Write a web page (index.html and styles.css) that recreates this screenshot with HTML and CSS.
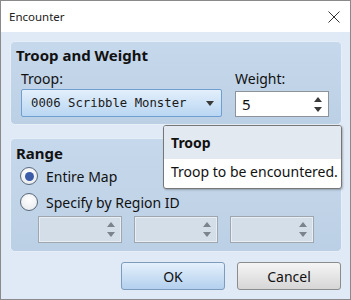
FILE: index.html
```html
<!DOCTYPE html>
<html lang="en">
<head>
  <meta charset="UTF-8" />
  <title>Encounter</title>
  <link rel="stylesheet" href="styles.css">
</head>
<body>
  <div class="dialog">
    <div class="titlebar">
      <span class="title">Encounter</span>
      <svg class="close" width="12" height="12" viewBox="0 0 12 12">
        <path d="M0.5 0.5 L11.5 11.5 M11.5 0.5 L0.5 11.5" stroke="#333" stroke-width="1" fill="none"/>
      </svg>
    </div>

    <div class="content">
      <div class="group troop-group">
        <div class="group-title">Troop and Weight</div>
        <div class="fields">
          <div class="field">
            <label class="field-label">Troop:</label>
            <div class="combo">
              <span class="combo-text">0006 Scribble Monster</span>
              <span class="arrow-down dark"></span>
            </div>
          </div>
          <div class="field">
            <label class="field-label">Weight:</label>
            <div class="spin weight-spin">
              <span class="spin-value">5</span>
              <span class="spin-arrows">
                <span class="arrow-up dark"></span>
                <span class="arrow-down dark"></span>
              </span>
            </div>
          </div>
        </div>
      </div>

      <div class="group range-group">
        <div class="group-title">Range</div>
        <div class="radio-row">
          <span class="radio checked"></span>
          <span>Entire Map</span>
        </div>
        <div class="radio-row">
          <span class="radio"></span>
          <span>Specify by Region ID</span>
        </div>
        <div class="region-spins">
          <div class="spin disabled">
            <span class="spin-arrows">
              <span class="arrow-up"></span>
              <span class="arrow-down"></span>
            </span>
          </div>
          <div class="spin disabled">
            <span class="spin-arrows">
              <span class="arrow-up"></span>
              <span class="arrow-down"></span>
            </span>
          </div>
          <div class="spin disabled">
            <span class="spin-arrows">
              <span class="arrow-up"></span>
              <span class="arrow-down"></span>
            </span>
          </div>
        </div>
      </div>

      <div class="buttons">
        <button class="btn btn-default">OK</button>
        <button class="btn">Cancel</button>
      </div>

      <div class="tooltip">
        <div class="tooltip-head">Troop</div>
        <div class="tooltip-body">Troop to be encountered.</div>
      </div>
    </div>
  </div>
</body>
</html>
```

FILE: styles.css
```css
* { box-sizing: border-box; }
body {
  margin: 0;
  font-family: "Noto Sans", "Open Sans", sans-serif;
  font-size: 14px;
  color: #111;
  background: #dfeaf6;
}
.dialog {
  width: 351px;
  height: 300px;
  border: 1px solid #8a8a8a;
  background: #dfeaf6;
  display: flex;
  flex-direction: column;
}
.titlebar {
  height: 31px;
  flex: none;
  background: #fff;
  display: flex;
  align-items: center;
  justify-content: space-between;
  padding: 0 10px 0 8px;
}
.title {
  font-size: 11.5px;
  line-height: 31px;
  color: #222;
}
.close {
  margin-top: 1px;
}
.content {
  position: relative;
  flex: 1;
  padding: 9px 8px 0 9px;
}
.group {
  border: 1px solid #e6eef8;
  border-radius: 5px;
  background: linear-gradient(#c6d8eb, #bcd0e5);
}
.troop-group {
  height: 84px;
  padding: 3px 10px 0 5px;
}
.range-group {
  height: 114px;
  margin-top: 13px;
  padding: 4px 10px 0 5px;
}
.group-title {
  font-weight: bold;
  font-size: 15px;
  line-height: 20px;
}
.fields {
  display: flex;
  gap: 13px;
  margin-top: 4px;
  padding-left: 5px;
}
.field {
  display: flex;
  flex-direction: column;
}
.field-label {
  line-height: 20px;
}
.combo {
  width: 201px;
  height: 28px;
  border: 1px solid #6f9fd2;
  border-radius: 2px;
  background: linear-gradient(#e3effb, #b9d6f2);
  display: flex;
  align-items: center;
  justify-content: space-between;
  padding: 0 7px 0 9px;
}
.combo-text {
  font-family: "DejaVu Sans Mono", "Liberation Mono", monospace;
  font-size: 12.3px;
  color: #1a1a1a;
}
.spin {
  height: 27px;
  border: 1px solid #8c939b;
  background: #fff;
  display: flex;
  align-items: center;
  justify-content: space-between;
  padding: 0 6px 0 6px;
}
.weight-spin {
  width: 94px;
  height: 26px;
  margin-top: 2px;
}
.spin-value {
  font-size: 15px;
}
.spin-arrows {
  display: flex;
  flex-direction: column;
  gap: 5px;
  margin-left: auto;
}
.arrow-up, .arrow-down {
  display: block;
  width: 0;
  height: 0;
  border-left: 4px solid transparent;
  border-right: 4px solid transparent;
}
.arrow-up { border-bottom: 5px solid #7b838d; }
.arrow-down { border-top: 5px solid #7b838d; }
.arrow-up.dark { border-bottom-color: #3a3a3a; }
.arrow-down.dark { border-top-color: #3a3a3a; }
.radio-row {
  display: flex;
  align-items: center;
  gap: 8px;
  height: 26px;
  padding-left: 4px;
}
.radio {
  width: 18px;
  height: 18px;
  border-radius: 50%;
  border: 1px solid #59687a;
  background: radial-gradient(circle at 50% 35%, #ffffff, #e4e7eb);
  display: flex;
  align-items: center;
  justify-content: center;
}
.radio.checked::after {
  content: "";
  width: 9px;
  height: 9px;
  border-radius: 50%;
  background: #3c5ca8;
}
.region-spins {
  display: flex;
  gap: 12px;
  margin-top: 1px;
  padding-left: 22px;
}
.spin.disabled {
  width: 84px;
  background: #d4dee9;
  border-color: #9ea6b0;
  box-shadow: inset 0 0 0 1px #e9eef4;
}
.buttons {
  display: flex;
  justify-content: flex-end;
  gap: 12px;
  margin-top: 10px;
  margin-right: 1px;
}
.btn {
  width: 104px;
  height: 28px;
  font-family: "Noto Sans", "Open Sans", sans-serif;
  font-size: 14px;
  color: #111;
  border: 1px solid #8c8c8c;
  border-radius: 3px;
  background: linear-gradient(#f5f5f5, #d6d6d6);
  padding: 0;
}
.btn-default {
  border-color: #7d9bbb;
  background: linear-gradient(#e4f0fc, #b3d0ee);
}
.tooltip {
  position: absolute;
  left: 162px;
  top: 93px;
  width: 179px;
  height: 64px;
  border: 1px solid #767676;
  border-radius: 3px;
  background: #fff;
  box-shadow: 1px 1px 2px rgba(0, 0, 0, 0.25);
  overflow: hidden;
}
.tooltip-head {
  height: 33px;
  line-height: 33px;
  padding-left: 7px;
  font-weight: bold;
  background: #e3e9f0;
}
.tooltip-body {
  padding: 3px 0 0 7px;
  line-height: 20px;
}
```
